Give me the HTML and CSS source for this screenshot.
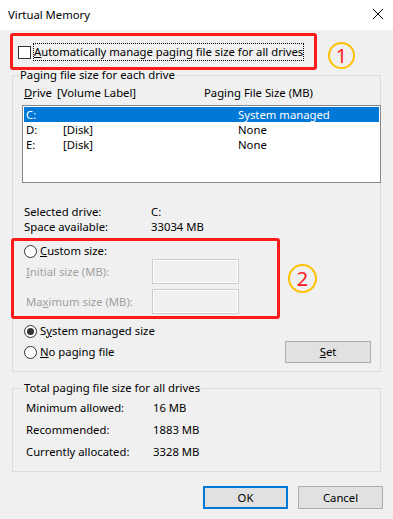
FILE: index.html
```html
<!DOCTYPE html>
<html lang="en">
<head>
    <meta charset="UTF-8">
    <meta name="viewport" content="width=device-width, initial-scale=1.0">
    <title>Virtual Memory</title>
    <link rel="stylesheet" href="styles.css">
</head>
<body>
    <div class="titlebar">
        <span class="title">Virtual Memory</span>
        <svg class="close" width="12" height="12" viewBox="0 0 12 12">
            <path d="M1 1L11 11M11 1L1 11" stroke="#000" stroke-width="1" fill="none"/>
        </svg>
    </div>

    <div class="content">
        <div class="auto-row">
            <div class="mark-box mark-auto">
                <span class="checkbox"></span>
                <span class="focus"><u>A</u>utomatically manage paging file size for all drives</span>
            </div>
            <span class="callout callout-1">1</span>
        </div>

        <fieldset class="group group-drives">
            <legend>Paging file size for each drive</legend>
            <div class="list-head">
                <span><u>D</u>rive</span>
                <span>[Volume Label]</span>
                <span>Paging File Size (MB)</span>
            </div>
            <div class="listbox">
                <div class="list-row selected"><span>C:</span><span></span><span>System managed</span></div>
                <div class="list-row"><span>D:</span><span>[Disk]</span><span>None</span></div>
                <div class="list-row"><span>E:</span><span>[Disk]</span><span>None</span></div>
            </div>

            <div class="info">
                <span>Selected drive:</span><span>C:</span>
                <span>Space available:</span><span>33034 MB</span>
            </div>

            <div class="custom-row">
                <div class="mark-box mark-custom">
                    <div class="radio-line"><span class="radio"></span><span><u>C</u>ustom size:</span></div>
                    <div class="size-field">
                        <span class="disabled"><u>I</u>nitial size (MB):</span>
                        <span class="textbox"></span>
                    </div>
                    <div class="size-field">
                        <span class="disabled">Ma<u>x</u>imum size (MB):</span>
                        <span class="textbox"></span>
                    </div>
                </div>
                <span class="callout callout-2">2</span>
            </div>

            <div class="radio-line system-line"><span class="radio checked"></span><span>S<u>y</u>stem managed size</span></div>
            <div class="set-row">
                <div class="radio-line"><span class="radio"></span><span><u>N</u>o paging file</span></div>
                <button class="btn btn-set"><u>S</u>et</button>
            </div>
        </fieldset>

        <fieldset class="group group-total">
            <legend>Total paging file size for all drives</legend>
            <div class="totals">
                <span>Minimum allowed:</span><span>16 MB</span>
                <span>Recommended:</span><span>1883 MB</span>
                <span>Currently allocated:</span><span>3328 MB</span>
            </div>
        </fieldset>

        <div class="actions">
            <button class="btn btn-ok">OK</button>
            <button class="btn">Cancel</button>
        </div>
    </div>
</body>
</html>
```

FILE: styles.css
```css
body {
    margin: 0;
    width: 393px;
    height: 519px;
    background-color: #f0f0f0;
    font-family: "Noto Sans", sans-serif;
    font-size: 11.3px;
    line-height: 16px;
    color: #000;
    overflow: hidden;
    white-space: nowrap;
}
u {
    text-underline-offset: 1px;
}
.titlebar {
    height: 30px;
    background-color: #fff;
    display: flex;
    align-items: center;
    padding: 0 9px 0 8px;
}
.title {
    flex: 1;
}
.close {
    margin-top: -2px;
}
.content {
    padding-top: 3px;
}

/* red annotation boxes and numbered circles */
.mark-box {
    border: 3px solid #ff1a1a;
    border-radius: 3px;
    box-sizing: border-box;
}
.callout {
    box-sizing: border-box;
    border: 2px solid #ffc000;
    border-radius: 50%;
    color: #ff1a1a;
    font-size: 20px;
    display: flex;
    align-items: center;
    justify-content: center;
}
.auto-row {
    display: flex;
    margin-left: 10px;
}
.mark-auto {
    width: 307px;
    height: 37px;
    display: flex;
    align-items: center;
    padding-left: 5px;
}
.callout-1 {
    width: 27px;
    height: 27px;
    margin: 9px 0 0 11px;
}
.checkbox {
    width: 13px;
    height: 13px;
    box-sizing: border-box;
    border: 1px solid #333;
    background-color: #fff;
    margin-top: 1px;
}
.focus {
    margin-left: 2px;
    padding: 1px;
    outline: 1px dotted #000;
    outline-offset: -1px;
}

/* group boxes */
.group {
    margin: 0 12px;
    border: 1px solid #dcdcdc;
    padding: 2px 0 8px 9px;
    min-width: 0;
}
.group legend {
    padding: 0 1px;
    margin-left: -3px;
}
.group-drives {
    margin-top: -3px;
}
.list-head {
    display: grid;
    grid-template-columns: 33px 147px auto;
    padding-left: 2px;
    margin-bottom: 4px;
}
.listbox {
    width: 359px;
    height: 78px;
    box-sizing: border-box;
    border: 1px solid #828790;
    background-color: #fff;
    padding: 1px;
}
.list-row {
    display: grid;
    grid-template-columns: 37px 175px auto;
    padding-left: 2px;
    height: 15px;
    line-height: 15px;
}
.list-row.selected {
    background-color: #0078d7;
    color: #fff;
}
.info {
    display: grid;
    grid-template-columns: 127px auto;
    line-height: 15px;
    margin: 21px 0 0 2px;
}
.custom-row {
    display: flex;
    align-items: center;
    margin: 4px 0 0 -11px;
}
.mark-custom {
    width: 269px;
    padding: 2px 0 2px 10px;
}
.callout-2 {
    width: 29px;
    height: 29px;
    margin-left: 8px;
}
.radio-line {
    display: flex;
    align-items: center;
    gap: 3px;
}
.radio {
    width: 13px;
    height: 13px;
    box-sizing: border-box;
    border: 1px solid #333;
    border-radius: 50%;
    background-color: #fff;
    display: flex;
    align-items: center;
    justify-content: center;
}
.radio.checked::after {
    content: "";
    width: 7px;
    height: 7px;
    border-radius: 50%;
    background-color: #333;
}
.size-field {
    display: grid;
    grid-template-columns: 126px 87px;
    align-items: center;
    padding-left: 2px;
}
.size-field + .size-field {
    margin-top: 5px;
}
.disabled {
    color: #a0a0a0;
}
.textbox {
    height: 25px;
    box-sizing: border-box;
    border: 1px solid #cccccc;
    box-shadow: inset 0 0 0 1px #fff;
}
.system-line {
    margin: 4px 0 0 2px;
}
.set-row {
    display: flex;
    align-items: center;
    justify-content: space-between;
    margin: 2px 9px 0 2px;
}

/* buttons */
.btn {
    font: inherit;
    color: #000;
    width: 85px;
    height: 23px;
    padding: 0;
    background-color: #e1e1e1;
    border: 1px solid #adadad;
}
.btn-set {
    width: 86px;
    height: 22px;
}
.btn-ok {
    border: 2px solid #0078d7;
}
.group-total {
    margin-top: 8px;
    padding: 1px 0 8px 13px;
}
.totals {
    display: grid;
    grid-template-columns: 127px auto;
    line-height: 22px;
}
.actions {
    display: flex;
    justify-content: flex-end;
    gap: 10px;
    margin-top: 14px;
    padding-right: 10px;
}
```
